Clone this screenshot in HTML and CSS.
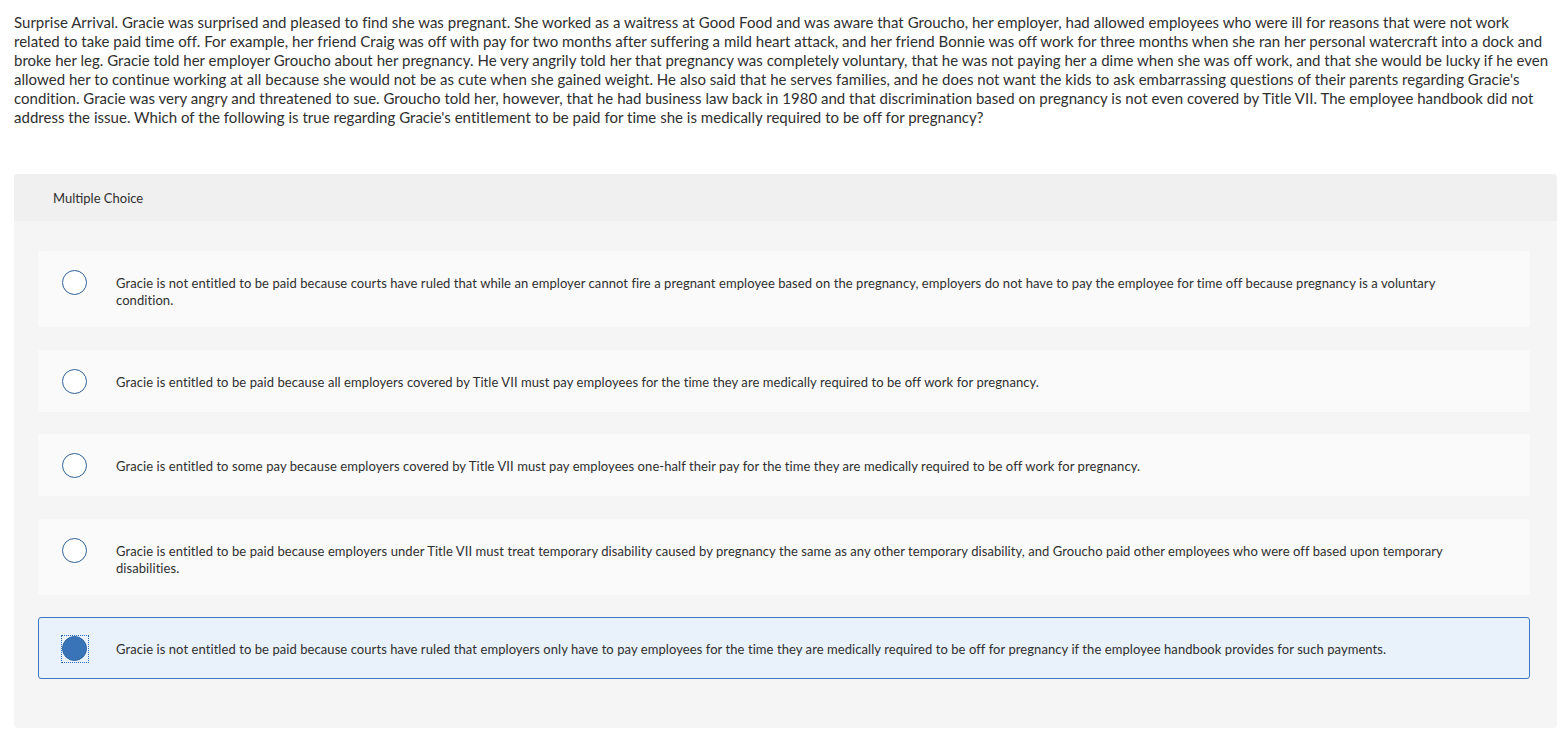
FILE: index.html
```html
<!DOCTYPE html>
<html lang="en">
<head>
<meta charset="utf-8">
<title>Multiple Choice</title>
<link rel="stylesheet" href="styles.css">
</head>
<body>
<div class="page">
  <p class="question">Surprise Arrival. Gracie was surprised and pleased to find she was pregnant. She worked as a waitress at Good Food and was aware that Groucho, her employer, had allowed employees who were ill for reasons that were not work related to take paid time off. For example, her friend Craig was off with pay for two months after suffering a mild heart attack, and her friend Bonnie was off work for three months when she ran her personal watercraft into a dock and broke her leg. Gracie told her employer Groucho about her pregnancy. He very angrily told her that pregnancy was completely voluntary, that he was not paying her a dime when she was off work, and that she would be lucky if he even allowed her to continue working at all because she would not be as cute when she gained weight. He also said that he serves families, and he does not want the kids to ask embarrassing questions of their parents regarding Gracie's condition. Gracie was very angry and threatened to sue. Groucho told her, however, that he had business law back in 1980 and that discrimination based on pregnancy is not even covered by Title VII. The employee handbook did not address the issue. Which of the following is true regarding Gracie's entitlement to be paid for time she is medically required to be off for pregnancy?</p>

  <section class="panel">
    <div class="panel-head">Multiple Choice</div>
    <div class="panel-body">
      <div class="option">
        <span class="radio"></span>
        <span class="opt-text">Gracie is not entitled to be paid because courts have ruled that while an employer cannot fire a pregnant employee based on the pregnancy, employers do not have to pay the employee for time off because pregnancy is a voluntary condition.</span>
      </div>
      <div class="option">
        <span class="radio"></span>
        <span class="opt-text">Gracie is entitled to be paid because all employers covered by Title VII must pay employees for the time they are medically required to be off work for pregnancy.</span>
      </div>
      <div class="option">
        <span class="radio"></span>
        <span class="opt-text">Gracie is entitled to some pay because employers covered by Title VII must pay employees one-half their pay for the time they are medically required to be off work for pregnancy.</span>
      </div>
      <div class="option">
        <span class="radio"></span>
        <span class="opt-text">Gracie is entitled to be paid because employers under Title VII must treat temporary disability caused by pregnancy the same as any other temporary disability, and Groucho paid other employees who were off based upon temporary disabilities.</span>
      </div>
      <div class="option selected">
        <span class="radio checked"></span>
        <span class="opt-text">Gracie is not entitled to be paid because courts have ruled that employers only have to pay employees for the time they are medically required to be off for pregnancy if the employee handbook provides for such payments.</span>
      </div>
    </div>
  </section>
</div>
</body>
</html>
```

FILE: styles.css
```css
html, body {
  margin: 0;
  padding: 0;
  background: #ffffff;
}

body {
  font-family: Lato, "Liberation Sans", sans-serif;
  color: #2f2f2f;
}

.page {
  padding: 13px 6px 0 14px;
}

.question {
  margin: 0;
  font-size: 15px;
  letter-spacing: 0.02px;
  line-height: 19px;
  padding-right: 4px;
}

.panel {
  margin-top: 47px;
  background: #f5f5f5;
  border-radius: 4px;
  overflow: hidden;
  padding-bottom: 49px;
}

.panel-head {
  background: #f0f0f0;
  height: 47px;
  display: flex;
  align-items: center;
  padding-left: 39px;
  font-size: 13px;
}

.panel-body {
  display: flex;
  flex-direction: column;
  gap: 22.5px;
  padding: 30px 27px 0 24px;
}

.option {
  display: flex;
  align-items: flex-start;
  background: #fafafa;
  border: 1px solid transparent;
  border-radius: 3px;
  padding: 18px 60px 17px 23px;
}

.option.selected {
  background: #e9f2fb;
  border-color: #3a78c0;
}

.radio {
  position: relative;
  flex: 0 0 auto;
  width: 23px;
  height: 23px;
  border: 1.5px solid #2f6398;
  border-radius: 50%;
  margin-right: 29px;
  background: #ffffff;
}

.radio.checked {
  background: #3a74b8;
  border-color: #2f66a6;
}

.radio.checked::after {
  content: "";
  position: absolute;
  top: -2.5px;
  left: -2.5px;
  right: -2.5px;
  bottom: -2.5px;
  border: 1px dotted #2a6bc0;
}

.opt-text {
  font-size: 13px;
  letter-spacing: 0.07px;
  line-height: 17px;
  margin-top: 5px;
}
```
